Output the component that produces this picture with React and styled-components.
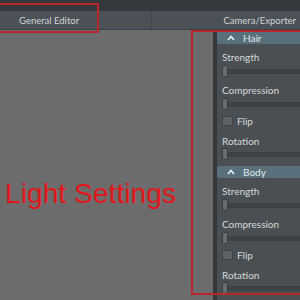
import React from 'react';
import styled, { createGlobalStyle } from 'styled-components';

const GlobalStyle = createGlobalStyle`
  html, body {
    margin: 0;
    padding: 0;
    background: #6c6c6c;
  }
  * {
    box-sizing: border-box;
  }
`;

const Screen = styled.div`
  position: relative;
  width: 300px;
  height: 300px;
  overflow: hidden;
  display: flex;
  flex-direction: column;
  background: #6c6c6c;
  font-family: Lato, "Open Sans", sans-serif;
`;

const TopStrip = styled.div`
  height: 11px;
  flex: none;
  background: #35393c;
`;

const TabBar = styled.div`
  height: 19px;
  flex: none;
  display: flex;
  align-items: center;
  background: #4b5156;
  border-bottom: 1px solid #3b3f42;
`;

const Tab = styled.div`
  height: 100%;
  display: flex;
  align-items: center;
  justify-content: ${p => (p.$end ? 'flex-end' : 'flex-start')};
  padding: 0 ${p => p.$right || 0}px 0 ${p => p.$left || 0}px;
  width: ${p => (p.$width ? `${p.$width}px` : 'auto')};
  flex: ${p => (p.$width ? 'none' : '1')};
  color: #d2d5d7;
  font-size: 9.5px;
  white-space: nowrap;
  border-right: ${p => (p.$divider ? '1px solid #43484c' : 'none')};
`;

const Body = styled.div`
  flex: 1;
  display: flex;
  min-height: 0;
`;

const Canvas = styled.div`
  flex: 1;
  background: #6c6c6c;
`;

const Panel = styled.div`
  width: 87px;
  flex: none;
  background: #4a4f53;
  border-left: 4px solid #33373a;
  padding-top: 2px;
  overflow: hidden;
`;

const SectionHeader = styled.div`
  height: 12px;
  display: flex;
  align-items: center;
  padding-left: 10px;
  gap: 8px;
  background: #58707c;
  color: #e3e8eb;
  font-size: 10px;
`;

const Content = styled.div`
  padding: 7px 0 6px 5px;
  display: flex;
  flex-direction: column;
`;

const Label = styled.div`
  height: 12px;
  line-height: 12px;
  color: #d6d8da;
  font-size: 10px;
  white-space: nowrap;
  margin-top: ${p => p.$top || 0}px;
`;

const Slider = styled.div`
  position: relative;
  height: 12px;
  margin-top: ${p => p.$top || 0}px;
  display: flex;
  align-items: center;
`;

const Track = styled.div`
  flex: 1;
  height: 5px;
  background: #3d4246;
`;

const Handle = styled.div`
  position: absolute;
  left: 0;
  top: 0;
  width: 6px;
  height: 12px;
  background: #676c70;
  border: 1px solid #3a3e41;
  border-radius: 1px;
`;

const CheckRow = styled.div`
  height: 12px;
  display: flex;
  align-items: center;
  gap: 4px;
  margin-top: ${p => p.$top || 0}px;
  color: #d6d8da;
  font-size: 10px;
`;

const Box = styled.div`
  width: 11px;
  height: 10px;
  background: #5d6266;
  border: 1px solid #3f4346;
  border-radius: 1px;
`;

const Annotation = styled.div`
  position: absolute;
  left: ${p => p.$x}px;
  top: ${p => p.$y}px;
  width: ${p => p.$w}px;
  height: ${p => p.$h}px;
  border: 2px solid #b8262c;
  pointer-events: none;
`;

const Caption = styled.div`
  position: absolute;
  left: 5px;
  top: 178px;
  color: #e3161b;
  font-family: "Liberation Sans", Arial, sans-serif;
  font-size: 28px;
  line-height: 32px;
  letter-spacing: 0.1px;
`;

const Chevron = () => (
  <svg width="8" height="6" viewBox="0 0 8 6">
    <polyline points="1,5 4,1.5 7,5" fill="none" stroke="#eef2f4" strokeWidth="1.6" />
  </svg>
);

const SliderField = ({ top }) => (
  <Slider $top={top}>
    <Track />
    <Handle />
  </Slider>
);

const Section = ({ title }) => (
  <>
    <SectionHeader>
      <Chevron />
      {title}
    </SectionHeader>
    <Content>
      <Label>Strength</Label>
      <SliderField top={2} />
      <Label $top={7}>Compression</Label>
      <SliderField top={2} />
      <CheckRow $top={5}>
        <Box />
        Flip
      </CheckRow>
      <Label $top={8}>Rotation</Label>
      <SliderField top={1} />
    </Content>
  </>
);

export default function App() {
  return (
    <>
      <GlobalStyle />
      <Screen>
        <TopStrip />
        <TabBar>
          <Tab $left={19} $width={152} $divider>General Editor</Tab>
          <Tab $end $right={4}>Camera/Exporter</Tab>
        </TabBar>
        <Body>
          <Canvas />
          <Panel>
            <Section title="Hair" />
            <Section title="Body" />
          </Panel>
        </Body>
        <Annotation $x={-6} $y={3} $w={105} $h={30} />
        <Annotation $x={191} $y={30} $w={120} $h={265} />
        <Caption>Light Settings</Caption>
      </Screen>
    </>
  );
}
